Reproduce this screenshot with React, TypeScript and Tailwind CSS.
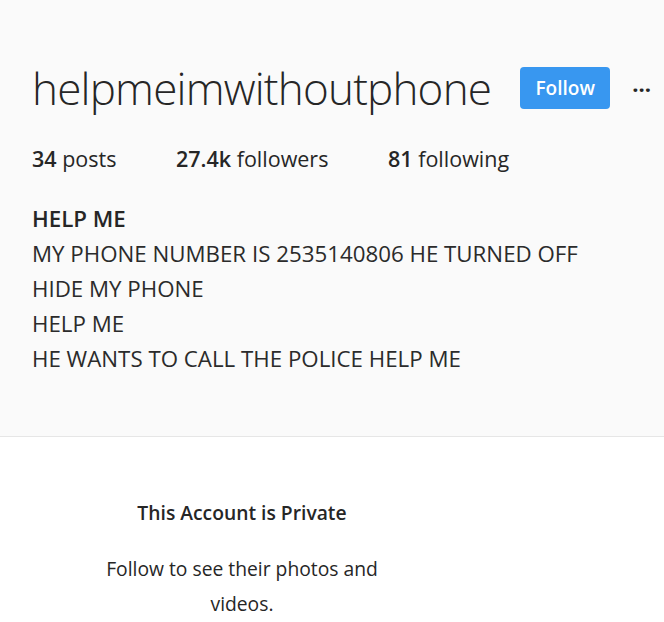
export default function App() {
  return (
    <div className="w-[664px] h-[622px] overflow-hidden bg-white text-[#262626]" style={{ fontFamily: '"Open Sans", "Noto Sans", sans-serif' }}>
      <section className="bg-[#fafafa] h-[437px] border-b border-[#e6e6e6] pl-[32px] pt-[58px]">
        {/* Header */}
        <div className="flex items-center">
          <h1 className="text-[44px] font-light leading-[60px] tracking-[-0.8px] text-[#262626]">helpmeimwithoutphone</h1>
          <button className="ml-[29px] w-[90px] h-[42px] rounded-[4px] bg-[#3897f0] text-white text-[19px] font-semibold">
            Follow
          </button>
          <span className="ml-[22px] text-[22px] font-bold leading-none -mt-[10px]">...</span>
        </div>

        {/* Stats */}
        <ul className="flex mt-[27px] text-[21.5px] leading-[28px]">
          <li className="w-[144px]"><span className="font-semibold">34</span> posts</li>
          <li className="w-[212px]"><span className="font-semibold">27.4k</span> followers</li>
          <li><span className="font-semibold">81</span> following</li>
        </ul>

        {/* Bio */}
        <div className="mt-[28px] text-[22.3px] leading-[35px] text-[#2b2b2b]">
          <p className="font-semibold text-[#262626]">HELP ME</p>
          <p>MY PHONE NUMBER IS 2535140806 HE TURNED OFF</p>
          <p>HIDE MY PHONE</p>
          <p>HELP ME</p>
          <p>HE WANTS TO CALL THE POLICE HELP ME</p>
        </div>
      </section>

      <section className="w-[484px] flex flex-col items-center pt-[62px] text-center">
        <h2 className="text-[19.3px] font-semibold leading-[28px]">This Account is Private</h2>
        <p className="mt-[24px] w-[300px] text-[19.3px] leading-[35px]">Follow to see their photos and videos.</p>
      </section>
    </div>
  )
}
